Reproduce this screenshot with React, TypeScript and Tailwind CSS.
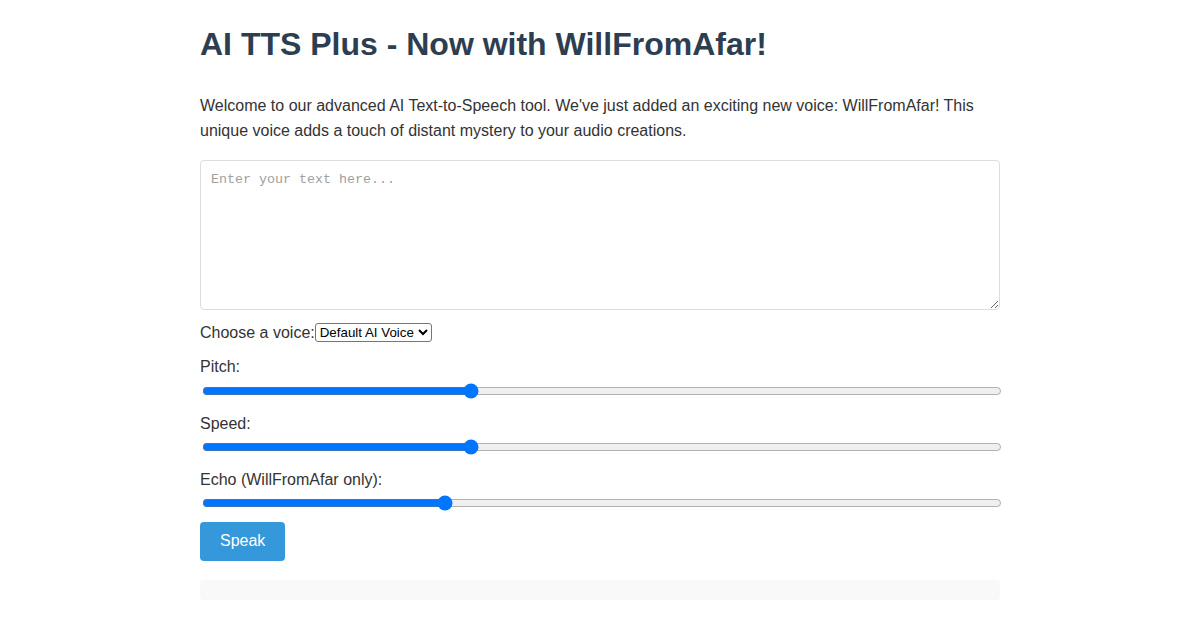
export default function App() {
  return (
    <div className="min-h-screen bg-white font-['Liberation_Sans',Arial,sans-serif] text-[#333]">
      <div className="w-[800px] mx-auto pt-[26px]">
        <h1 className="text-[32px] font-bold leading-[37px] text-[#2c3e50]">
          AI TTS Plus - Now with WillFromAfar!
        </h1>
        <p className="mt-[29.5px] text-base leading-[25.6px]">
          Welcome to our advanced AI Text-to-Speech tool. We've just added an
          exciting new voice: WillFromAfar! This unique voice adds a touch of
          distant mystery to your audio creations.
        </p>
        <textarea
          placeholder="Enter your text here..."
          className="block mt-[16.5px] w-full h-[150px] px-[10px] pt-[9px] pb-[10px] border border-[#ddd] rounded-[4px] font-['Liberation_Mono',monospace] text-[13.33px] placeholder:text-[#a0a0a0]"
        />
        <div className="mt-[13px] h-[19px] flex items-center text-base">
          <label htmlFor="voice">Choose a voice:</label>
          <select
            id="voice"
            className="h-[19px] text-[13.33px] text-black border border-[#767676] rounded-[3px] bg-white"
          >
            <option>Default AI Voice</option>
            <option>WillFromAfar</option>
          </select>
        </div>
        <div className="mt-[16px] flex flex-col gap-[16px]">
          <Slider label="Pitch:" min={0.5} max={2} step={0.1} value={1} />
          <Slider label="Speed:" min={0.5} max={2} step={0.1} value={1} />
          <Slider label="Echo (WillFromAfar only):" min={0} max={1} step={0.1} value={0.3} />
        </div>
        <button className="mt-[11px] px-5 py-[10px] bg-[#3498db] text-white text-base leading-[18.4px] rounded-[4px]">
          Speak
        </button>
        <div className="mt-[19px] h-[20px] rounded-[4px] bg-[#f9f9f9]" />
      </div>
    </div>
  );
}

function Slider({
  label,
  min,
  max,
  step,
  value,
}: {
  label: string;
  min: number;
  max: number;
  step: number;
  value: number;
}) {
  return (
    <div>
      <label className="block leading-[18.4px]">{label}</label>
      <input
        type="range"
        min={min}
        max={max}
        step={step}
        defaultValue={value}
        className="block mt-[6px] ml-[2px] w-[800px] h-4"
      />
    </div>
  );
}
